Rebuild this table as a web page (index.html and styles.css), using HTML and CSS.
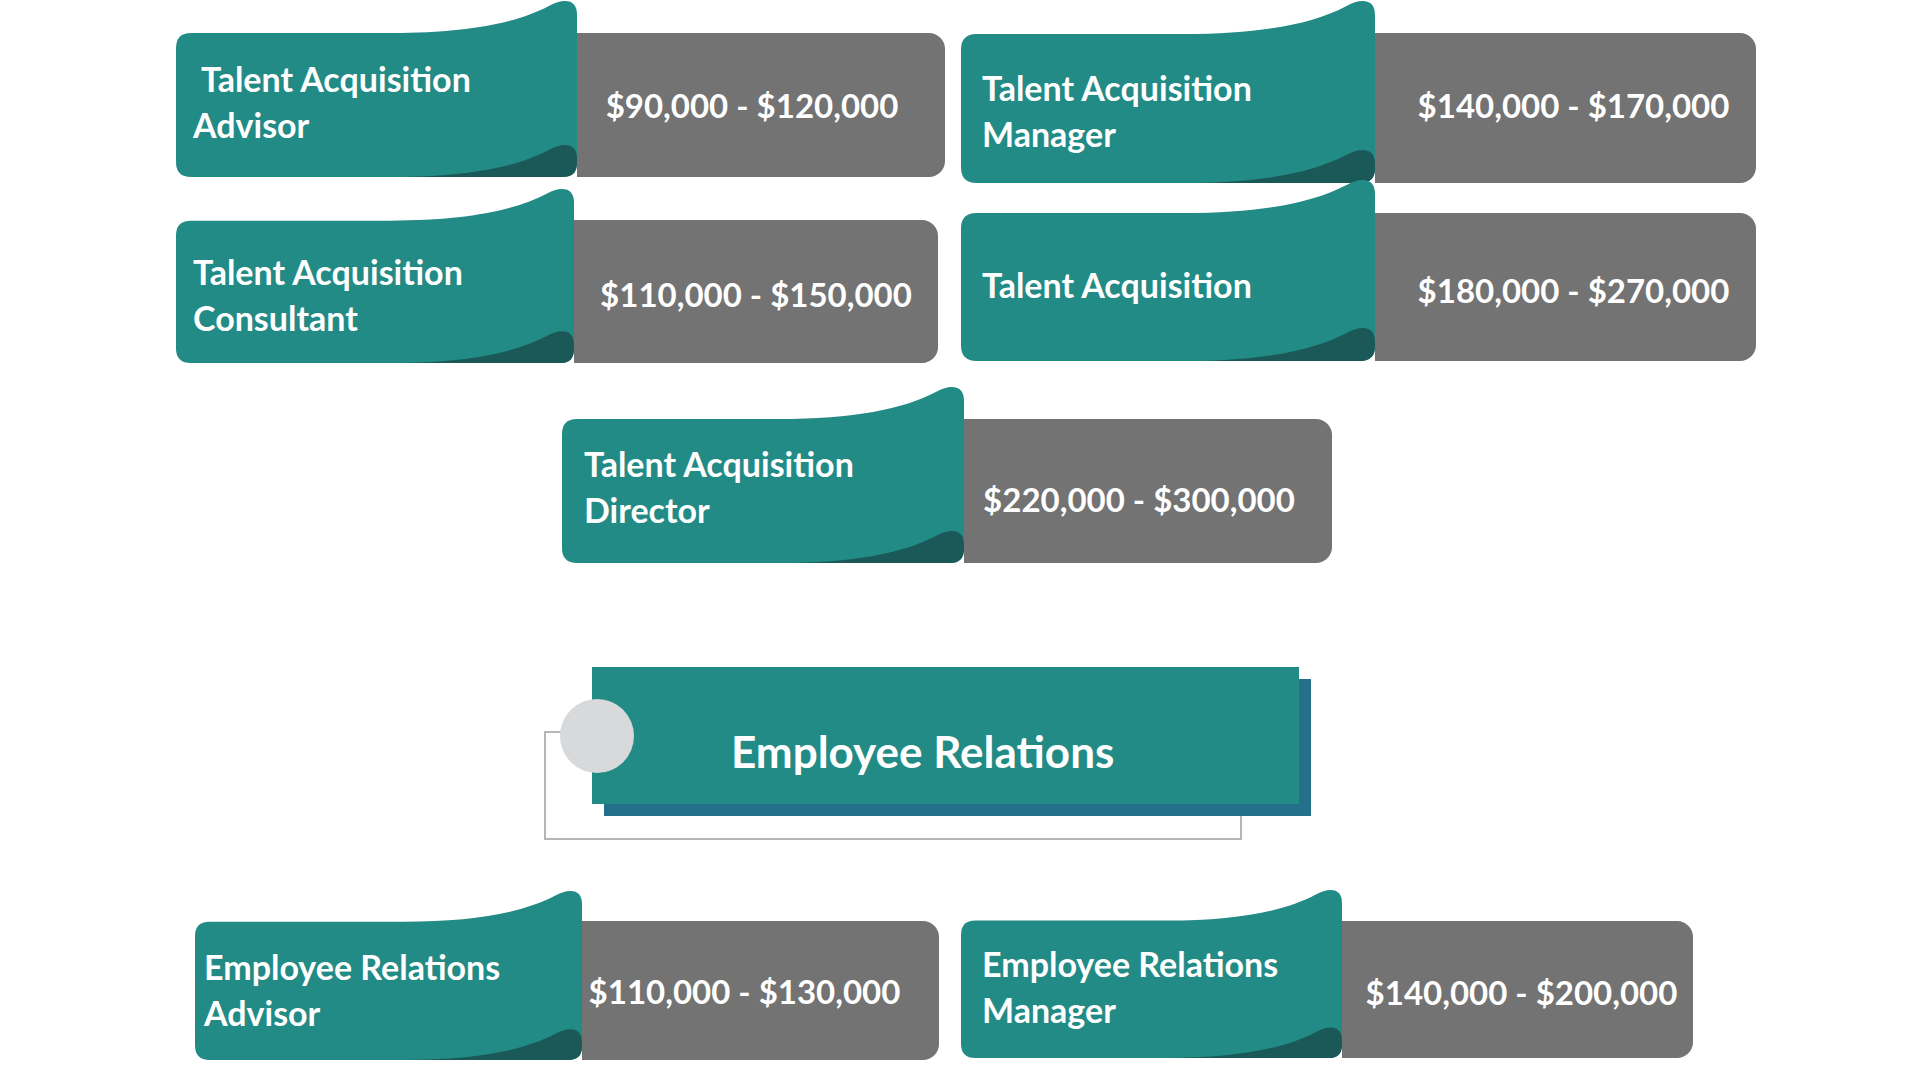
FILE: index.html
```html
<!DOCTYPE html>
<html lang="en">
<head>
<meta charset="utf-8">
<title>Salary Ranges</title>
<link rel="stylesheet" href="styles.css">
</head>
<body>
<div class="page">

  <div class="row row-1">
    <div class="card card-a">
      <div class="label">
        <svg class="ribbon" viewBox="0 0 400 176" preserveAspectRatio="none"><path class="ribbon-body" d="M0,47 Q0,32 15,32 L215,32 C290,32 340,22 372,5 Q381,0 388,0 Q400,0 400,14 L400,162 Q400,176 386,176 L15,176 Q0,176 0,161 Z"/><path class="ribbon-curl" d="M215,176 C290,176 340,166 372,149 Q381,144 388,144 Q400,144 400,158 L400,162 Q400,176 386,176 Z"/></svg>
        <div class="label-text"><div class="label-lines"><span class="indent">Talent Acquisition</span><br>Advisor</div></div>
      </div>
      <div class="price">$90,000 - $120,000</div>
    </div>
    <div class="card card-b">
      <div class="label">
        <svg class="ribbon" viewBox="0 0 400 176" preserveAspectRatio="none"><path class="ribbon-body" d="M0,47 Q0,32 15,32 L215,32 C290,32 340,22 372,5 Q381,0 388,0 Q400,0 400,14 L400,162 Q400,176 386,176 L15,176 Q0,176 0,161 Z"/><path class="ribbon-curl" d="M215,176 C290,176 340,166 372,149 Q381,144 388,144 Q400,144 400,158 L400,162 Q400,176 386,176 Z"/></svg>
        <div class="label-text"><div class="label-lines">Talent Acquisition<br>Manager</div></div>
      </div>
      <div class="price">$140,000 - $170,000</div>
    </div>
  </div>

  <div class="row row-2">
    <div class="card card-c">
      <div class="label">
        <svg class="ribbon" viewBox="0 0 400 176" preserveAspectRatio="none"><path class="ribbon-body" d="M0,47 Q0,32 15,32 L215,32 C290,32 340,22 372,5 Q381,0 388,0 Q400,0 400,14 L400,162 Q400,176 386,176 L15,176 Q0,176 0,161 Z"/><path class="ribbon-curl" d="M215,176 C290,176 340,166 372,149 Q381,144 388,144 Q400,144 400,158 L400,162 Q400,176 386,176 Z"/></svg>
        <div class="label-text"><div class="label-lines">Talent Acquisition<br>Consultant</div></div>
      </div>
      <div class="price">$110,000 - $150,000</div>
    </div>
    <div class="card card-d">
      <div class="label">
        <svg class="ribbon" viewBox="0 0 400 176" preserveAspectRatio="none"><path class="ribbon-body" d="M0,47 Q0,32 15,32 L215,32 C290,32 340,22 372,5 Q381,0 388,0 Q400,0 400,14 L400,162 Q400,176 386,176 L15,176 Q0,176 0,161 Z"/><path class="ribbon-curl" d="M215,176 C290,176 340,166 372,149 Q381,144 388,144 Q400,144 400,158 L400,162 Q400,176 386,176 Z"/></svg>
        <div class="label-text"><div class="label-lines">Talent Acquisition</div></div>
      </div>
      <div class="price">$180,000 - $270,000</div>
    </div>
  </div>

  <div class="row row-3">
    <div class="card card-e">
      <div class="label">
        <svg class="ribbon" viewBox="0 0 400 176" preserveAspectRatio="none"><path class="ribbon-body" d="M0,47 Q0,32 15,32 L215,32 C290,32 340,22 372,5 Q381,0 388,0 Q400,0 400,14 L400,162 Q400,176 386,176 L15,176 Q0,176 0,161 Z"/><path class="ribbon-curl" d="M215,176 C290,176 340,166 372,149 Q381,144 388,144 Q400,144 400,158 L400,162 Q400,176 386,176 Z"/></svg>
        <div class="label-text"><div class="label-lines">Talent Acquisition<br>Director</div></div>
      </div>
      <div class="price">$220,000 - $300,000</div>
    </div>
  </div>

  <div class="section-head">
    <div class="head-frame"></div>
    <div class="head-box">Employee Relations</div>
    <div class="head-dot"></div>
  </div>

  <div class="row row-4">
    <div class="card card-f">
      <div class="label">
        <svg class="ribbon" viewBox="0 0 400 176" preserveAspectRatio="none"><path class="ribbon-body" d="M0,47 Q0,32 15,32 L215,32 C290,32 340,22 372,5 Q381,0 388,0 Q400,0 400,14 L400,162 Q400,176 386,176 L15,176 Q0,176 0,161 Z"/><path class="ribbon-curl" d="M215,176 C290,176 340,166 372,149 Q381,144 388,144 Q400,144 400,158 L400,162 Q400,176 386,176 Z"/></svg>
        <div class="label-text"><div class="label-lines">Employee Relations<br>Advisor</div></div>
      </div>
      <div class="price">$110,000 - $130,000</div>
    </div>
    <div class="card card-g">
      <div class="label">
        <svg class="ribbon" viewBox="0 0 400 176" preserveAspectRatio="none"><path class="ribbon-body" d="M0,47 Q0,32 15,32 L215,32 C290,32 340,22 372,5 Q381,0 388,0 Q400,0 400,14 L400,162 Q400,176 386,176 L15,176 Q0,176 0,161 Z"/><path class="ribbon-curl" d="M215,176 C290,176 340,166 372,149 Q381,144 388,144 Q400,144 400,158 L400,162 Q400,176 386,176 Z"/></svg>
        <div class="label-text"><div class="label-lines">Employee Relations<br>Manager</div></div>
      </div>
      <div class="price">$140,000 - $200,000</div>
    </div>
  </div>

</div>
</body>
</html>
```

FILE: styles.css
```css
* { box-sizing: border-box; }

html, body {
  margin: 0;
  padding: 0;
  background: #ffffff;
}

body {
  width: 1920px;
  height: 1080px;
  overflow: hidden;
  font-family: "Lato", "Open Sans", "Liberation Sans", sans-serif;
  color: #ffffff;
}

.page {
  width: 1920px;
  height: 1080px;
}

.row {
  display: flex;
  align-items: flex-start;
}

.row-1 { height: 180px; }
.row-2 { height: 207px; }
.row-3 { height: 176px; }
.row-4 { margin-top: 50px; }

.card {
  display: flex;
  align-items: flex-end;
  flex: none;
}

.label {
  position: relative;
  flex: none;
}

.ribbon {
  position: absolute;
  left: 0;
  top: 0;
  width: 100%;
  height: 100%;
  display: block;
}

.ribbon-body { fill: #238b86; }
.ribbon-curl { fill: #1a5957; }

.label-text {
  position: relative;
  height: 100%;
  display: flex;
  flex-direction: column;
  justify-content: center;
  font-size: 34px;
  font-weight: 700;
  line-height: 46px;
  white-space: nowrap;
}

.label-lines { display: block; }

.label-text .indent { padding-left: 8px; }

.price {
  flex: none;
  background: #737373;
  border-radius: 0 16px 16px 0;
  display: flex;
  align-items: center;
  justify-content: center;
  font-size: 33px;
  font-weight: 700;
  white-space: nowrap;
}

/* individual cards */
.card-a { margin-left: 176px; margin-top: 1px; }
.card-a .label { width: 401px; height: 176px; }
.card-a .label-text { padding: 25px 0 0 17px; }
.card-a .price { width: 368px; height: 144px; padding-right: 18px; }

.card-b { margin-left: 16px; margin-top: 1px; }
.card-b .label { width: 414px; height: 182px; }
.card-b .label-text { padding: 37px 0 0 21px; }
.card-b .price { width: 381px; height: 150px; padding-left: 16px; padding-bottom: 6px; }

.card-c { margin-left: 176px; margin-top: 9px; }
.card-c .label { width: 398px; height: 174px; }
.card-c .label-text { padding: 37px 0 0 17px; }
.card-c .price { width: 364px; height: 143px; padding-top: 5px; }

.card-d { margin-left: 23px; }
.card-d .label { width: 414px; height: 181px; }
.card-d .label-text { padding: 29px 0 0 21px; }
.card-d .price { width: 381px; height: 148px; padding-left: 16px; padding-top: 6px; }

.card-e { margin-left: 562px; }
.card-e .label { width: 402px; height: 176px; }
.card-e .label-text { padding: 24px 0 0 22px; }
.card-e .price { width: 368px; height: 144px; padding-right: 18px; padding-top: 16px; }

.card-f { margin-left: 195px; margin-top: 1px; }
.card-f .label { width: 387px; height: 169px; }
.card-f .label-text { padding: 28px 0 0 9px; }
.card-f .price { width: 357px; height: 139px; padding-right: 32px; }

.card-g { margin-left: 22px; }
.card-g .label { width: 381px; height: 168px; }
.card-g .label-text { padding: 26px 0 0 21px; }
.card-g .price { width: 351px; height: 137px; padding-left: 8px; padding-top: 5px; }

/* section heading */
.section-head {
  position: relative;
  margin-top: 104px;
  margin-left: 544px;
  width: 767px;
  height: 173px;
}

.head-frame {
  position: absolute;
  left: 0;
  top: 64px;
  width: 698px;
  height: 109px;
  border: 2px solid #b4b6ba;
}

.head-box {
  position: relative;
  margin-left: 48px;
  width: 707px;
  height: 137px;
  background: #238b86;
  box-shadow: 12px 12px 0 #246f8a;
  padding: 58px 0 0 139px;
  font-size: 44px;
  font-weight: 700;
  line-height: 1.2;
  white-space: nowrap;
}

.head-dot {
  position: absolute;
  left: 16px;
  top: 32px;
  width: 74px;
  height: 74px;
  border-radius: 50%;
  background: #d8d9db;
}
```
